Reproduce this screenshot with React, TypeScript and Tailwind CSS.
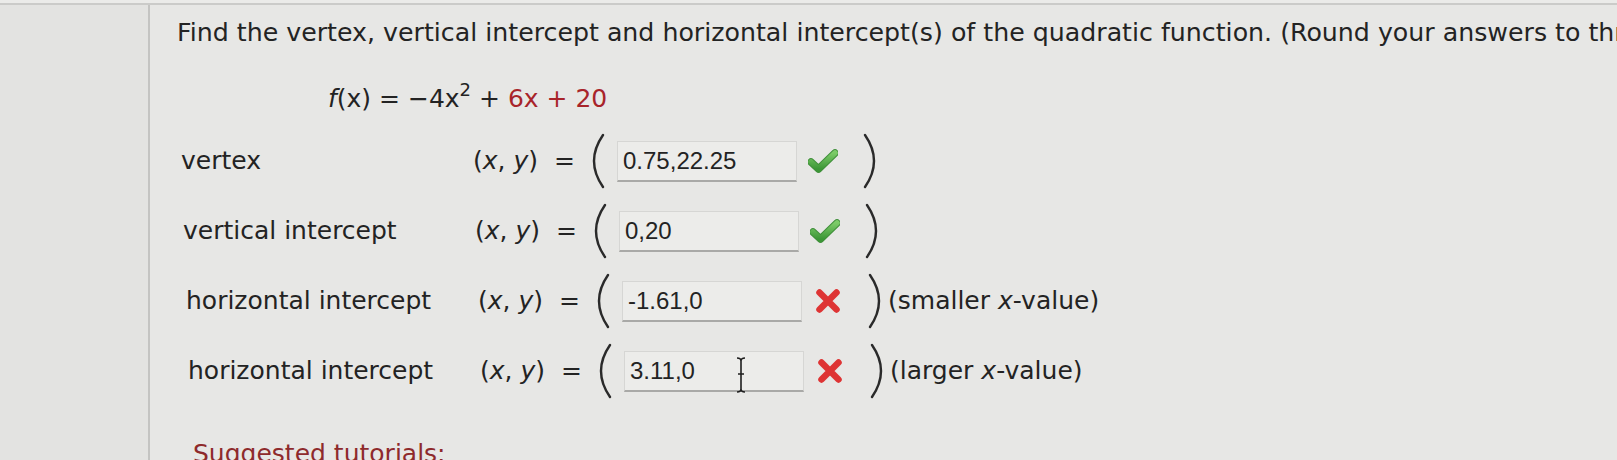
import React from "react";

type Row = { label: string; value: string; ok: boolean; note?: string; cursor?: boolean; shift: string };

const rows: Row[] = [
  { label: "vertex", value: "0.75,22.25", ok: true, shift: "pl-0" },
  { label: "vertical intercept", value: "0,20", ok: true, shift: "pl-[2px]" },
  { label: "horizontal intercept", value: "-1.61,0", ok: false, note: "smaller", shift: "pl-[5px]" },
  { label: "horizontal intercept", value: "3.11,0", ok: false, note: "larger", cursor: true, shift: "pl-[7px]" },
];

const sans = "font-['DejaVu_Sans',Verdana,sans-serif]";

const Paren = ({ right }: { right?: boolean }) => (
  <svg width="16" height="56" viewBox="0 0 16 56" className="shrink-0">
    <path
      d={right ? "M2 2 Q20 28 2 54" : "M14 2 Q-4 28 14 54"}
      fill="none"
      stroke="#2a2a2a"
      strokeWidth="2.4"
      strokeLinecap="round"
    />
  </svg>
);

const Check = () => (
  <svg width="30" height="24" viewBox="0 0 30 24">
    <defs>
      <linearGradient id="chk" x1="0" y1="0" x2="0" y2="1">
        <stop offset="0" stopColor="#7ccb68" />
        <stop offset="1" stopColor="#3c9636" />
      </linearGradient>
    </defs>
    <path
      d="M3 13 L10.5 20 L27 4"
      fill="none"
      stroke="#3f8f39"
      strokeWidth="7.5"
      strokeLinecap="round"
      strokeLinejoin="round"
    />
    <path
      d="M3 13 L10.5 20 L27 4"
      fill="none"
      stroke="url(#chk)"
      strokeWidth="5.5"
      strokeLinecap="round"
      strokeLinejoin="round"
    />
  </svg>
);

const Cross = () => (
  <svg width="26" height="26" viewBox="0 0 26 26">
    <path d="M4.5 4.5 L21.5 21.5 M21.5 4.5 L4.5 21.5" stroke="#de3434" strokeWidth="6.5" strokeLinecap="round" />
  </svg>
);

const Cursor = () => (
  <svg width="12" height="36" viewBox="0 0 12 36" className="absolute left-[110px] top-[5px]">
    <path d="M2 1 Q6 1 6 4 L6 32 Q6 35 2 35 M10 1 Q6 1 6 4 M6 32 Q6 35 10 35 M3 17 L9 17" fill="none" stroke="#1e1e1e" strokeWidth="1.6" />
  </svg>
);

export default function App() {
  return (
    <div className="w-[1617px] h-[460px] overflow-hidden bg-[#e7e7e5] flex flex-col text-[#232323]">
      <div className="h-[3px] shrink-0 bg-[#ebebe9]" />
      <div className="h-[2px] shrink-0 bg-[#cbcbc9]" />
      <div className="flex flex-1 min-h-0">
        <div className="w-[150px] shrink-0 bg-[#e3e3e1] border-r-2 border-[#c4c4c2]" />
        <div className="flex-1 min-w-0 pl-[27px] pt-[14px]">
          <div className={`${sans} text-[25.25px] leading-[28px] whitespace-nowrap`}>
            Find the vertex, vertical intercept and horizontal intercept(s) of the quadratic function. (Round your answers to three decimal places.)
          </div>
          <div className={`${sans} text-[25px] leading-[28px] whitespace-nowrap pl-[151px] mt-[38px]`}>
            <i>f</i>(x) = −4x<sup className="text-[18px] relative -top-[11px]">2</sup> + <span className="text-[#a8242a]">6x + 20</span>
          </div>
          <div className="mt-[13px]">
            {rows.map((r, i) => (
              <div key={i} className={`flex items-center h-[70px] ${r.shift}`}>
                <div className={`${sans} text-[25px] w-[296px] pl-[4px] shrink-0 whitespace-nowrap`}>{r.label}</div>
                <div className={`${sans} text-[25px] w-[116px] shrink-0 whitespace-nowrap`}>
                  (<i>x</i>, <i>y</i>) &nbsp;=
                </div>
                <Paren />
                <div className="relative ml-[12px] w-[180px] h-[41px] shrink-0 bg-[#ececea] border border-[#d6d6d4] border-b-2 border-b-[#a9a9a7] flex items-center pl-[5px] font-['Liberation_Sans',Arial,sans-serif] text-[24px]">
                  {r.value}
                  {r.cursor && <Cursor />}
                </div>
                <div className="w-[34px] ml-[9px] flex justify-center shrink-0">{r.ok ? <Check /> : <Cross />}</div>
                <div className="ml-[23px]">
                  <Paren right />
                </div>
                {r.note && (
                  <div className={`${sans} text-[25px] ml-[4px] whitespace-nowrap`}>
                    ({r.note} <i>x</i>-value)
                  </div>
                )}
              </div>
            ))}
          </div>
          <div className={`${sans} text-[25px] leading-[28px] text-[#8e2a2c] mt-[34px] pl-[16px]`}>Suggested tutorials:</div>
        </div>
      </div>
    </div>
  );
}
